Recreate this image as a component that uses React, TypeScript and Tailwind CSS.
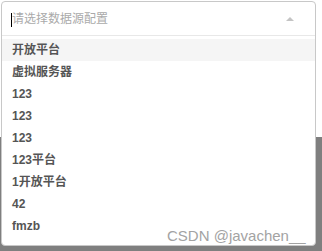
import React from 'react';

const options = ['开放平台', '虚拟服务器', '123', '123', '123', '123平台', '1开放平台', '42', 'fmzb'];

const App: React.FC = () => {
  return (
    <div
      className="relative w-[322px] h-[251px] overflow-hidden"
      style={{ fontFamily: '"Liberation Sans", Arial, "Noto Sans CJK SC", sans-serif' }}
    >
      {/* page behind the open select */}
      <div className="flex flex-col h-full">
        <div className="h-[137px] bg-white" />
        <div className="flex-1 bg-[#7f7f7f]" />
      </div>

      {/* select with open dropdown */}
      <div className="absolute top-[1px] left-[1px] w-[315px] h-[245px] bg-white border border-[#c8c8c8] rounded-[4px] flex flex-col">
        <div className="relative h-[34px] flex items-center pl-[10px] pr-[12px] border-b border-[#e8e8e8]">
          <span className="absolute left-[9px] top-[11px] w-[1px] h-[14px] bg-black" />
          <span className="text-[12px] text-[#aaaaaa]">请选择数据源配置</span>
          <span className="ml-auto w-0 h-0 border-l-[4px] border-r-[4px] border-b-[4px] border-l-transparent border-r-transparent border-b-[#c4c4c4] mr-[9px]" />
        </div>
        <ul className="pt-[3px]">
          {options.map((o, i) => (
            <li
              key={i}
              className={`h-[22px] flex items-center pl-[10px] text-[12px] font-bold text-[#555555] ${i === 0 ? 'bg-[#f5f5f5]' : ''}`}
            >
              {o}
            </li>
          ))}
        </ul>
      </div>

      {/* watermark */}
      <span className="absolute left-[167px] top-[227px] text-[15px] leading-[17px] text-[#a3a3a3]">
        CSDN @javachen__
      </span>
    </div>
  );
};

export default App;
